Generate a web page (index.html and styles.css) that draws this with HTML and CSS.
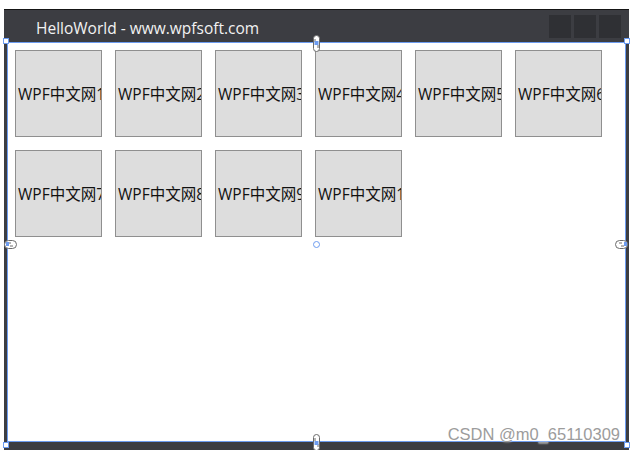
FILE: index.html
```html
<!DOCTYPE html>
<html lang="zh-CN">
<head>
    <meta charset="UTF-8">
    <meta name="viewport" content="width=device-width, initial-scale=1.0">
    <title>HelloWorld - www.wpfsoft.com</title>
    <link rel="stylesheet" href="styles.css">
</head>
<body>
    <div class="window">
        <div class="titlebar">
            <span class="title">HelloWorld - www.wpfsoft.com</span>
            <div class="caption-btns">
                <span class="cap-btn"></span>
                <span class="cap-btn"></span>
                <span class="cap-btn"></span>
            </div>
        </div>
        <div class="client">
            <div class="wrap-panel">
                <div class="tile">WPF中文网1</div>
                <div class="tile">WPF中文网2</div>
                <div class="tile">WPF中文网3</div>
                <div class="tile">WPF中文网4</div>
                <div class="tile">WPF中文网5</div>
                <div class="tile">WPF中文网6</div>
                <div class="tile">WPF中文网7</div>
                <div class="tile">WPF中文网8</div>
                <div class="tile">WPF中文网9</div>
                <div class="tile">WPF中文网10</div>
            </div>
        </div>

        <!-- designer adorners -->
        <span class="corner corner-tl"></span>
        <span class="corner corner-tr"></span>
        <span class="corner corner-bl"></span>
        <span class="corner corner-br"></span>
        <svg class="handle handle-top" width="7" height="17" viewBox="0 0 7 17">
            <rect x="0.5" y="0.5" width="6" height="16" rx="3" fill="#fff" stroke="#6b6b6b"/>
            <path d="M2 4v3M5 10v3" stroke="#6b6b6b" fill="none"/>
            <rect x="1.5" y="6" width="4" height="4" fill="#6d9cf0"/>
        </svg>
        <svg class="handle handle-bottom" width="7" height="17" viewBox="0 0 7 17">
            <rect x="0.5" y="0.5" width="6" height="16" rx="3" fill="#fff" stroke="#6b6b6b"/>
            <path d="M2 4v3M5 10v3" stroke="#6b6b6b" fill="none"/>
            <rect x="1.5" y="7" width="4" height="4" fill="#6d9cf0"/>
        </svg>
        <svg class="handle handle-left" width="13" height="9" viewBox="0 0 13 9">
            <rect x="0.5" y="0.5" width="12" height="8" rx="4" fill="#fff" stroke="#6b6b6b"/>
            <path d="M4 3h3M6 6h3" stroke="#6b6b6b" fill="none"/>
            <rect x="2" y="2" width="3" height="4" fill="#6d9cf0"/>
        </svg>
        <svg class="handle handle-right" width="13" height="9" viewBox="0 0 13 9">
            <rect x="0.5" y="0.5" width="12" height="8" rx="4" fill="#fff" stroke="#6b6b6b"/>
            <path d="M4 3h3M6 6h3" stroke="#6b6b6b" fill="none"/>
            <rect x="9" y="2" width="3" height="4" fill="#6d9cf0"/>
        </svg>
        <span class="center-dot"></span>

        <span class="watermark">CSDN @m0_65110309</span>
    </div>
</body>
</html>
```

FILE: styles.css
```css
body {
    margin: 0;
    background: #fff;
    font-family: "Open Sans", "Noto Sans CJK SC", sans-serif;
}
.window {
    position: relative;
    margin: 9px 0 0 4px;
    width: 625px;
    height: 440px;
    background: #3c3d42;
    border-top: 1px solid #151515;
}
.titlebar {
    display: flex;
    align-items: center;
    justify-content: space-between;
    height: 32px;
}
.title {
    padding-left: 32px;
    padding-top: 4px;
    color: #f2f2f2;
    font-size: 15.5px;
}
.caption-btns {
    display: flex;
    gap: 3px;
    margin-right: 8px;
    margin-top: 1px;
}
.cap-btn {
    width: 22px;
    height: 23px;
    background: #2f3034;
}
.client {
    margin: 0 3px;
    height: 398px;
    background: #fff;
    border: 1px solid #6d9cf0;
}
.wrap-panel {
    display: flex;
    flex-wrap: wrap;
    gap: 13px;
    padding: 7px 0 0 7px;
}
.tile {
    display: flex;
    align-items: center;
    box-sizing: border-box;
    width: 87px;
    height: 87px;
    padding: 0 1px 0 2px;
    overflow: hidden;
    white-space: nowrap;
    background: #dddddd;
    border: 1px solid #8f8f8f;
    color: #111;
    font-size: 15.5px;
}
.corner {
    position: absolute;
    width: 4px;
    height: 4px;
    background: #fff;
    border: 1px solid #6d9cf0;
}
.corner-tl { left: -1px; top: 28px; }
.corner-tr { left: 620px; top: 28px; }
.corner-bl { left: -1px; top: 432px; }
.corner-br { left: 620px; top: 432px; }
.handle {
    position: absolute;
    display: block;
}
.handle-top { left: 309px; top: 25px; }
.handle-bottom { left: 309px; top: 424px; }
.handle-left { left: 0; top: 230px; }
.handle-right { left: 611px; top: 230px; }
.center-dot {
    position: absolute;
    left: 309px;
    top: 231px;
    width: 5px;
    height: 5px;
    border: 1px solid #6d9cf0;
    border-radius: 50%;
    background: #fff;
}
.watermark {
    position: absolute;
    right: 9px;
    top: 415px;
    color: #9c9c9c;
    font-family: "Liberation Sans", sans-serif;
    font-size: 16.5px;
    text-shadow: 0 0 2px #fff;
}
```
